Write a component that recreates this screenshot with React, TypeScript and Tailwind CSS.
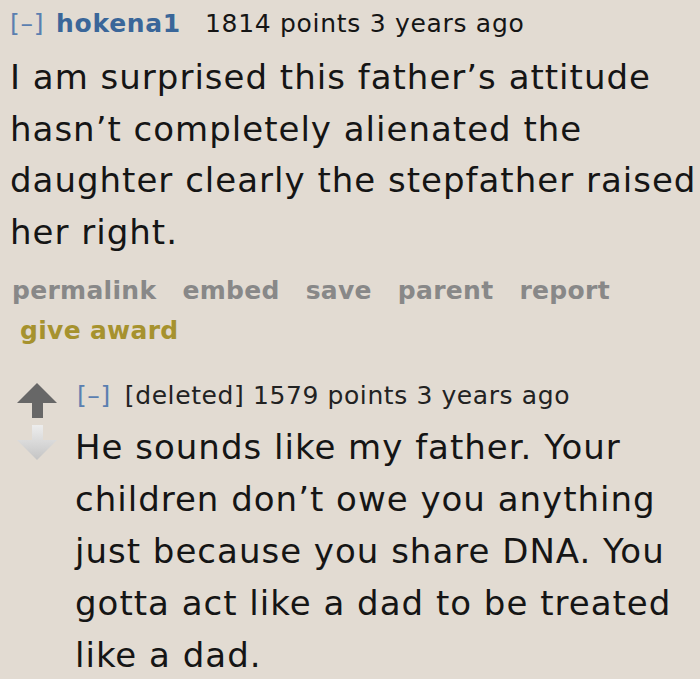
const font = { fontFamily: '"DejaVu Sans", Verdana, sans-serif' };

function UpArrow() {
  return (
    <svg width="40" height="35" viewBox="0 0 40 35">
      <path d="M20 0 L40 20 L26 20 L26 35 L15 35 L15 20 L0 20 Z" fill="#676767" />
    </svg>
  );
}

function DownArrow() {
  return (
    <svg width="40" height="35" viewBox="0 0 40 35">
      <defs>
        <linearGradient id="stem" x1="0" y1="0" x2="0" y2="1">
          <stop offset="0" stopColor="#ededed" />
          <stop offset="1" stopColor="#c4c4c4" />
        </linearGradient>
      </defs>
      <path d="M15 0 L26 0 L26 15 L40 15 L20 35 L0 15 L15 15 Z" fill="url(#stem)" />
    </svg>
  );
}

export default function App() {
  return (
    <div className="w-[700px] h-[679px] bg-[#e2dbd2] overflow-hidden text-[#151515]" style={font}>
      <div className="pl-[10px] pt-[7px]">
        <div className="text-[25px] leading-[34px] tracking-[0.7px] flex items-baseline">
          <span className="text-[#5b7fb0]">[–]</span>
          <span className="ml-[12px] font-bold text-[#3a6699]">hokena1</span>
          <span className="ml-[24px]">1814 points 3 years ago</span>
        </div>
        <div className="text-[34px] leading-[51.5px] tracking-[1px] mt-[11px]">
          <div>I am surprised this father’s attitude</div>
          <div>hasn’t completely alienated the</div>
          <div>daughter clearly the stepfather raised</div>
          <div>her right.</div>
        </div>
        <div className="mt-[13px] text-[25px] leading-[40px] font-bold tracking-[0.3px] text-[#888888] flex gap-[26px] pl-[2px]">
          <span>permalink</span>
          <span>embed</span>
          <span>save</span>
          <span>parent</span>
          <span>report</span>
        </div>
        <div className="text-[25px] leading-[40px] font-bold tracking-[0.3px] text-[#a6922e] pl-[10px]">give award</div>
      </div>
      <div className="flex mt-[28px] pl-[17px]">
        <div className="flex flex-col gap-[7px] pt-[4px] w-[58px]">
          <UpArrow />
          <DownArrow />
        </div>
        <div>
          <div className="text-[25px] leading-[34px] tracking-[0.6px] pl-[2px]">
            <span className="text-[#5b7fb0]">[–]</span>
            <span className="ml-[14px] text-[#222]">[deleted] 1579 points 3 years ago</span>
          </div>
          <div className="text-[34px] leading-[52px] tracking-[1px] mt-[8px]">
            <div>He sounds like my father. Your</div>
            <div>children don’t owe you anything</div>
            <div>just because you share DNA. You</div>
            <div>gotta act like a dad to be treated</div>
            <div>like a dad.</div>
          </div>
        </div>
      </div>
    </div>
  );
}
